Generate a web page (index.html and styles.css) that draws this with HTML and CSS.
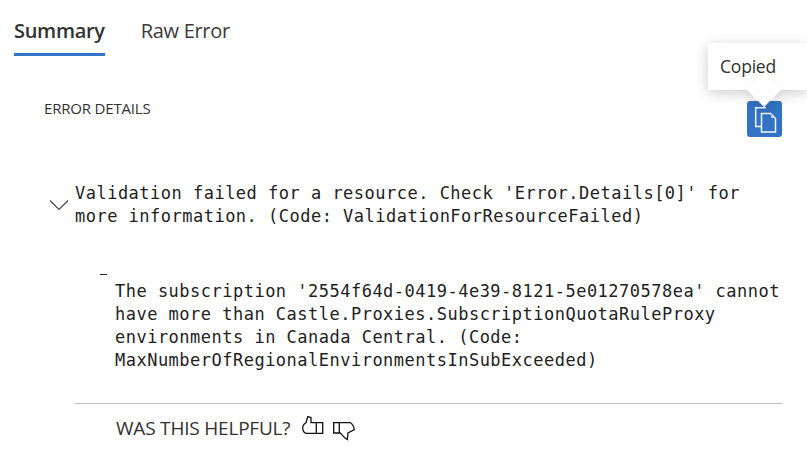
FILE: index.html
```html
<!DOCTYPE html>
<html lang="en">
<head>
<meta charset="utf-8">
<title>Error summary</title>
<link rel="stylesheet" href="styles.css">
</head>
<body>
<nav class="tabs">
  <span class="tab tab-active">Summary</span>
  <span class="tab">Raw Error</span>
</nav>
<header class="details-head">
  <h2 class="details-title">ERROR DETAILS</h2>
  <div class="copy-wrap">
    <div class="tooltip">Copied</div>
    <div class="tooltip-arrow"></div>
    <button class="copy-btn" aria-label="Copy">
      <svg width="24" height="27" viewBox="0 0 24 27" fill="none" stroke="#f4f7fb" stroke-width="1.5">
        <path d="M13 1.7H2.7V20.5H8"/>
        <path d="M8.5 7.5H17.5L22.5 12.5V26H8.5Z" fill="#3273c5"/>
        <path d="M18 9.5L20.5 12H18Z" fill="#c9d6e8" stroke="none"/>
      </svg>
    </button>
  </div>
</header>
<section class="error-row">
  <svg class="chevron" width="20" height="12" viewBox="0 0 20 12" fill="none" stroke="#444" stroke-width="1.1"><path d="M1 1.5L10 10.5L19 1.5"/></svg>
  <div class="error-body">
    <p class="mono">Validation failed for a resource. Check 'Error.Details[0]' for more information. (Code: ValidationForResourceFailed)</p>
    <div class="dash"></div>
    <p class="mono inner">The subscription '2554f64d-0419-4e39-8121-5e01270578ea' cannot have more than Castle.Proxies.SubscriptionQuotaRuleProxy environments in Canada Central. (Code: MaxNumberOfRegionalEnvironmentsInSubExceeded)</p>
    <footer class="feedback">
      <span class="feedback-label">WAS THIS HELPFUL?</span>
      <svg class="thumb thumb-up" width="22" height="19" viewBox="0 0 22 19" fill="none" stroke="#111" stroke-width="1.3"><path d="M5.7 .7L9 1.5V6.7H20.7V17.3H4.5C2 17.3 .7 14.5 .7 12C.7 9.5 2.5 7.5 4 6.7Z"/><path d="M14.3 6.7V17.3"/></svg>
      <svg class="thumb thumb-down" width="22" height="19" viewBox="0 0 22 19" fill="none" stroke="#111" stroke-width="1.3"><path d="M.7 .7H17.3C19.5 2 21 5 21.3 7.7L15 11L14.3 17.7C12.5 17 10 14 7.3 11H.7Z"/><path d="M6.3 .7V11"/></svg>
    </footer>
  </div>
</section>
</body>
</html>
```
FILE: styles.css
```css
html, body { margin: 0; padding: 0; }
body {
  width: 807px;
  height: 467px;
  overflow: hidden;
  background: #fff;
  color: #323130;
  font-family: "Open Sans", "Noto Sans", sans-serif;
  position: relative;
}
.tabs {
  display: flex;
  gap: 36px;
  padding: 17px 0 0 14px;
}
.tab {
  font-size: 20px;
  line-height: 28px;
  padding-bottom: 8px;
  border-bottom: 3px solid transparent;
  letter-spacing: -0.3px;
  color: #3b3a39;
}
.tab-active {
  font-weight: 600;
  border-bottom-color: #3274c6;
  color: #323130;
}
.details-head {
  display: flex;
  justify-content: space-between;
  padding: 43px 25px 0 44px;
  height: 37px;
}
.details-title {
  margin: 0;
  font-size: 15px;
  line-height: 18px;
  font-weight: 400;
  letter-spacing: -0.18px;
  color: #323130;
}
.copy-wrap { position: relative; width: 35px; height: 36px; margin-top: 2px; }
.copy-btn {
  display: flex;
  align-items: center;
  justify-content: center;
  width: 35px;
  height: 36px;
  padding: 0;
  border: 0;
  border-radius: 3px;
  background: #3273c5;
}
.tooltip {
  position: absolute;
  left: -39px;
  top: -58px;
  width: 99px;
  height: 47px;
  box-sizing: border-box;
  padding: 12px 0 0 12px;
  background: #fff;
  border-radius: 2px;
  font-size: 17.5px;
  line-height: 22px;
  letter-spacing: -0.2px;
  box-shadow: 0 3px 14px rgba(0,0,0,.2);
  z-index: 2;
}
.tooltip-arrow {
  position: absolute;
  left: 5px;
  top: -23px;
  width: 24px;
  height: 24px;
  background: #fff;
  transform: rotate(45deg);
  box-shadow: 4px 4px 10px rgba(0,0,0,.1);
  z-index: 3;
}
.error-row {
  display: flex;
  padding: 46px 25px 0 49px;
}
.chevron { margin: 17px 6px 0 0; flex: none; }
.error-body { flex: 1; }
.mono {
  margin: 0;
  font-family: "DejaVu Sans Mono", monospace;
  font-size: 17px;
  letter-spacing: .49px;
  line-height: 23px;
  color: #222;
}
.dash {
  width: 7px;
  height: 1px;
  margin: 46px 0 0 25px;
  background: #222;
}
.inner { margin: 5px 0 0 40px; }
.feedback {
  display: flex;
  align-items: flex-start;
  margin-top: 31px;
  padding: 12px 0 0 41px;
  border-top: 1px solid #bdbdbd;
}
.feedback-label {
  font-size: 19px;
  line-height: 24px;
  letter-spacing: -0.2px;
  color: #323130;
  margin-right: 12px;
}
.thumb-up { margin-right: 9px; }
.thumb-down { margin-top: 6px; }
```
